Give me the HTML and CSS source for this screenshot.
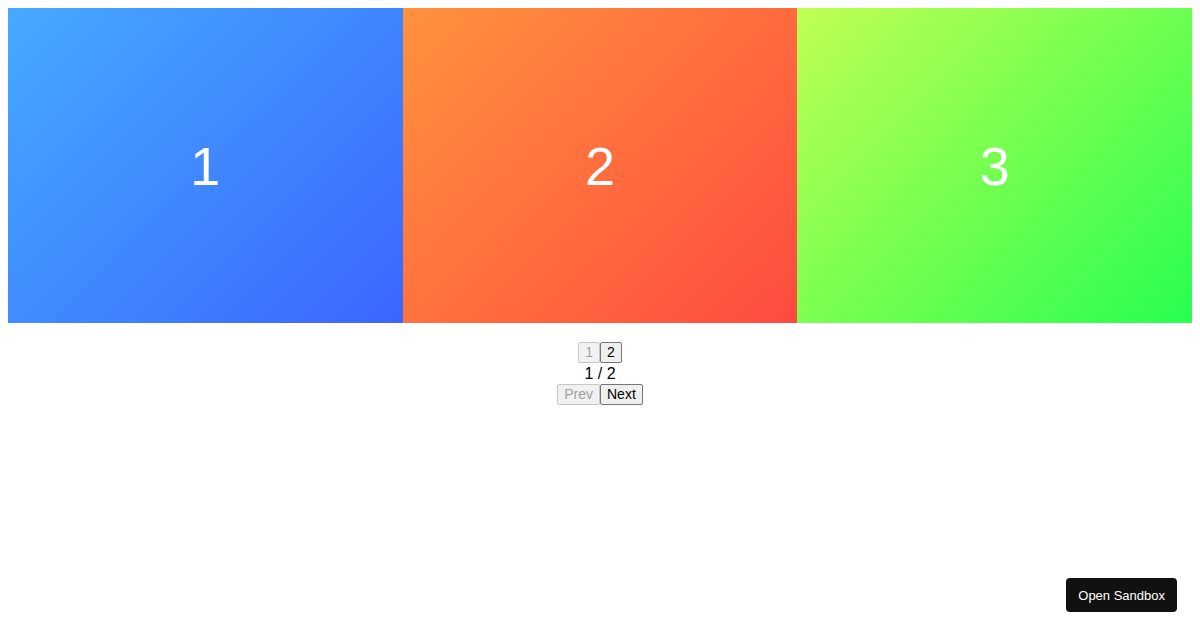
FILE: index.html
```html
<!DOCTYPE html>
<html>
<head>
<meta charset="utf-8">
<link rel="stylesheet" href="styles.css">
</head>
<body>
<div class="slider">
  <div class="slide slide-blue">1</div>
  <div class="slide slide-orange">2</div>
  <div class="slide slide-green">3</div>
</div>
<div class="controls">
  <div class="dots">
    <button class="btn" disabled>1</button><button class="btn">2</button>
  </div>
  <div class="counter">1 / 2</div>
  <div class="nav">
    <button class="btn" disabled>Prev</button><button class="btn">Next</button>
  </div>
</div>
<button class="sandbox">Open Sandbox</button>
</body>
</html>
```
FILE: styles.css
```css
html, body {
  margin: 0;
  padding: 0;
}
body {
  margin: 8px;
  font-family: "Liberation Sans", Arial, sans-serif;
  font-size: 16px;
  color: #000;
  background: #fff;
}
.slider {
  display: flex;
  height: 315px;
}
.slide {
  flex: 1 1 0;
  display: flex;
  align-items: center;
  justify-content: center;
  color: #fff;
  font-size: 54px;
  font-family: "Liberation Sans", Arial, sans-serif;
}
.slide-blue {
  background: linear-gradient(135deg, #45aaff 0%, #3b66ff 100%);
}
.slide-orange {
  background: linear-gradient(135deg, #ff923c 0%, #ff4a3f 100%);
}
.slide-green {
  background: linear-gradient(135deg, #c0ff52 0%, #28ff50 100%);
}
.controls {
  display: flex;
  flex-direction: column;
  align-items: center;
  margin-top: 19px;
}
.dots, .nav {
  display: flex;
}
.counter {
  line-height: 21px;
}
.btn {
  font-family: "Liberation Sans", Arial, sans-serif;
  font-size: 14px;
  padding: 1px 6px;
  margin: 0;
  background: #efefef;
  color: #000;
  border: 1px solid #767676;
  border-radius: 2px;
  line-height: 17px;
}
.btn:disabled {
  color: #a0a0a0;
  background: #f1f1f1;
  border-color: #c6c6c6;
}
.sandbox {
  position: fixed;
  right: 23px;
  bottom: 18px;
  background: #111;
  color: #fff;
  border: none;
  border-radius: 4px;
  font-family: "Liberation Sans", Arial, sans-serif;
  font-size: 13px;
  padding: 0 12px;
  height: 34px;
}
```
